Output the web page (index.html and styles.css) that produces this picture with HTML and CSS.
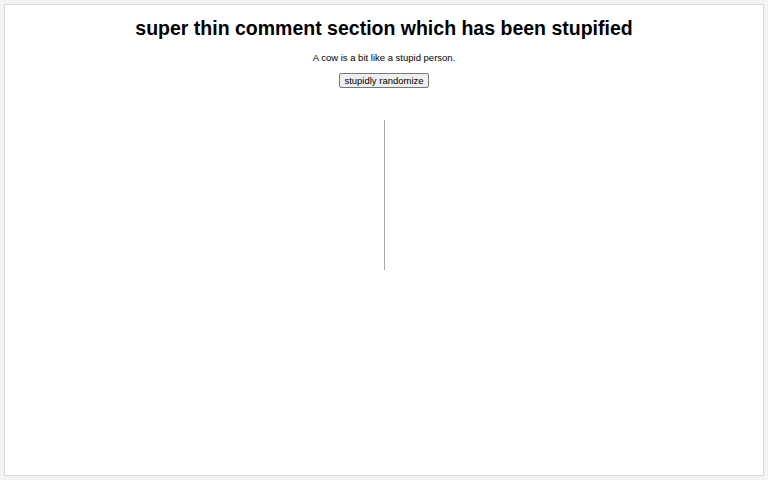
FILE: index.html
```html
<!DOCTYPE html>
<html lang="en">
<head>
  <meta charset="UTF-8">
  <title>super thin comment section</title>
  <link rel="stylesheet" href="styles.css">
</head>
<body>
  <div class="panel">
    <h1>super thin comment section which has been stupified</h1>
    <p class="note">A cow is a bit like a stupid person.</p>
    <button type="button" class="shuffle">stupidly randomize</button>
    <div class="thread"></div>
  </div>
</body>
</html>
```

FILE: styles.css
```css
body {
  margin: 0;
  padding: 4px;
  background-color: #f4f4f4;
  font-family: "Liberation Sans", Arial, sans-serif;
  color: #000;
}
.panel {
  box-sizing: border-box;
  height: 472px;
  background: #fff;
  border: 1px solid #dcdcdc;
  display: flex;
  flex-direction: column;
  align-items: center;
}
h1 {
  font-size: 19.5px;
  margin: 12px 0 0;
}
.note {
  font-size: 9.5px;
  margin: 12px 0 0;
}
.shuffle {
  margin-top: 10px;
  font-family: "Liberation Sans", Arial, sans-serif;
  font-size: 9.5px;
  padding: 1px 4px;
  background: #efefef;
  border: 1px solid #767676;
  border-radius: 2px;
}
.thread {
  margin-top: 32px;
  width: 0;
  height: 150px;
  border-left: 1px solid #aaa;
}
```
